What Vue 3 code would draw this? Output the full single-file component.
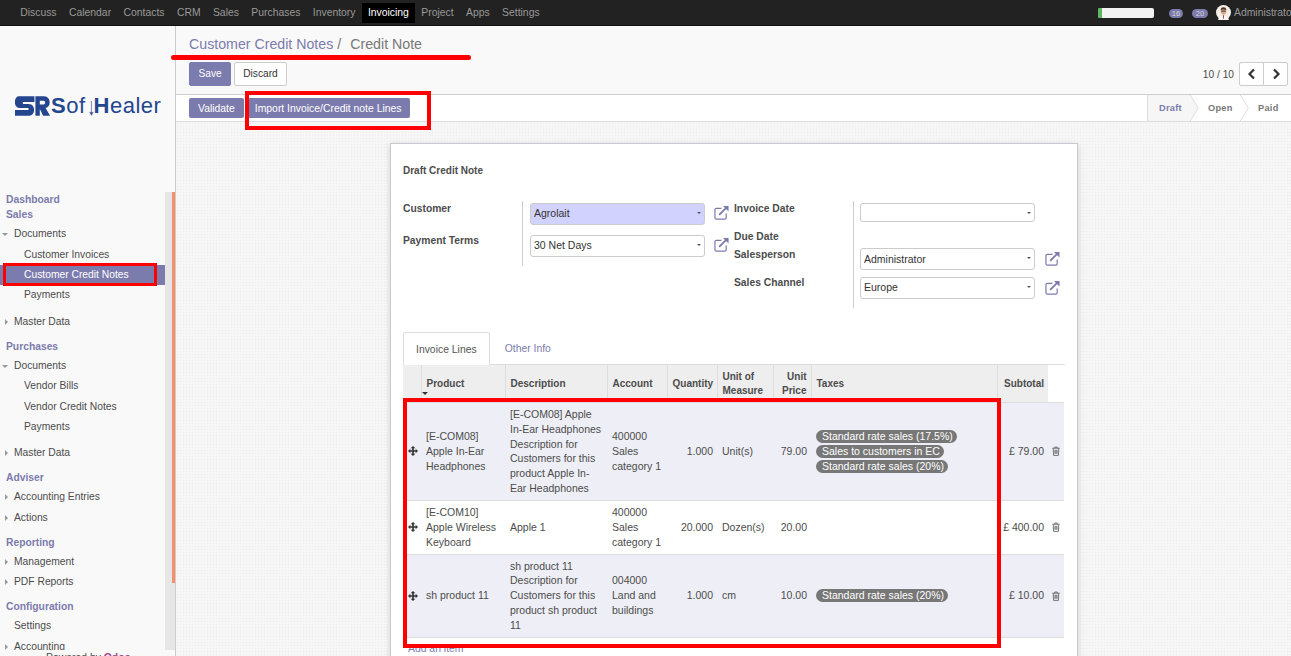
<template>
  <div class="app">
    <nav class="topbar">
      <div class="apps">
        <a v-for="app in apps" :key="app" :class="{ active: app === 'Invoicing' }">{{ app }}</a>
      </div>
      <div class="systray">
        <span class="progress"><i></i></span>
        <span class="bubble">16</span>
        <span class="bubble second">20</span>
        <svg class="avatar" viewBox="0 0 16 16">
          <circle cx="8" cy="8" r="8" fill="#f4efe9" />
          <path d="M2.5 16c.5-4 3-5 5.500-5s5 1 5.500 5z" fill="#fff" stroke="#d8d0c8" stroke-width=".5" />
          <path d="M7.400 11h1.200l-.3 4h-.6z" fill="#a33" />
          <ellipse cx="8" cy="6.500" rx="3" ry="3.800" fill="#d9a98a" />
          <path d="M5 5.500C5 3 6.500 2.300 8 2.300s3 .7 3 3.200C10 4.500 6 4.500 5 5.500z" fill="#4a342a" />
          <path d="M5.600 6h4.800v1H5.600z" fill="#333" />
        </svg>
        <span class="user">Administrator</span>
      </div>
    </nav>

    <div class="body">
      <aside class="sidebar">
        <div class="logo">
          <svg class="logo-mark" viewBox="0 0 36 20">
            <path d="M4 0H20V6H9C7.500 6 7.500 8 9 8H14C21.500 8 21.500 20 14 20H0V14H13C14.500 14 14.500 12 13 12H5C-2 12-1.500 0 4 0Z" fill="#24468e" />
            <path fill-rule="evenodd" d="M21 0H30C37 0 37.500 11 31.500 12L36 20H29L25.500 13V20H21ZM25.500 4.500V8.500H29.500C31.500 8.500 31.500 4.500 29.500 4.500Z" fill="#24468e" />
          </svg>
          <span class="logo-text"><b>S</b>of<span class="logo-t">↓</span><b>H</b>ealer</span>
        </div>

        <div class="menu">
          <template v-for="(section, i) in menu" :key="i">
            <div class="menu-head" :class="{ tight: section.tight, bare: !section.items.length }">{{ section.title }}</div>
            <template v-for="item in section.items" :key="item.label">
              <div class="menu-row" :class="{ gap: item.gap }">
                <span v-if="item.caret" class="caret" :class="item.caret"></span>
                {{ item.label }}
              </div>
              <div
                v-for="sub in item.children"
                :key="sub"
                class="menu-row sub"
                :class="{ current: sub === 'Customer Credit Notes' }"
              >{{ sub }}</div>
            </template>
          </template>
        </div>
        <div class="powered">Powered by <b>Odoo</b></div>

        <div class="scroll-track"></div>
        <div class="scroll-thumb"></div>
      </aside>

      <main class="main">
        <header class="control-panel">
          <div class="breadcrumb"><a>Customer Credit Notes</a><span class="slash">/</span><span>Credit Note</span></div>
          <div class="cp-row">
            <div class="cp-buttons">
              <button class="btn primary">Save</button>
              <button class="btn">Discard</button>
            </div>
            <div class="pager">
              <span>10 / 10</span>
              <div class="pager-btns">
                <button>
                  <svg viewBox="0 0 10 12"><path d="M7 1.500 2.500 6 7 10.500" /></svg>
                </button>
                <button>
                  <svg viewBox="0 0 10 12"><path d="M3 1.500 7.500 6 3 10.500" /></svg>
                </button>
              </div>
            </div>
          </div>
        </header>

        <div class="statusbar">
          <div class="status-actions">
            <button class="btn-sm">Validate</button>
            <button class="btn-sm">Import Invoice/Credit note Lines</button>
          </div>
          <div class="status-steps">
            <span v-for="step in steps" :key="step" class="step" :class="step.toLowerCase()">
              {{ step }}
              <svg v-if="step !== 'Paid'" class="chevron" viewBox="0 0 9 27">
                <path d="M0 0 8.500 13.500 0 27" />
              </svg>
            </span>
          </div>
        </div>

        <div class="content">
          <section class="sheet">
            <h1 class="doc-title">Draft Credit Note</h1>

            <div class="form-groups">
              <div class="group left">
                <label>Customer</label>
                <div class="field">
                  <span class="select required">Agrolait</span>
                  <svg class="ext" viewBox="0 0 16 16"><use href="#ext-link" /></svg>
                </div>
                <label>Payment Terms</label>
                <div class="field">
                  <span class="select">30 Net Days</span>
                  <svg class="ext" viewBox="0 0 16 16"><use href="#ext-link" /></svg>
                </div>
              </div>

              <div class="group right">
                <div class="r-row r1">
                  <label>Invoice Date</label>
                  <span class="select short"></span>
                </div>
                <div class="r-row r2">
                  <label>Due Date</label>
                </div>
                <div class="r-row r3">
                  <label>Salesperson</label>
                  <span class="select">Administrator</span>
                  <svg class="ext" viewBox="0 0 16 16"><use href="#ext-link" /></svg>
                </div>
                <div class="r-row r4">
                  <label>Sales Channel</label>
                  <span class="select">Europe</span>
                  <svg class="ext" viewBox="0 0 16 16"><use href="#ext-link" /></svg>
                </div>
              </div>
            </div>

            <div class="tabs">
              <a class="tab active">Invoice Lines</a>
              <a class="tab">Other Info</a>
            </div>

            <table class="lines">
              <colgroup>
                <col v-for="w in colWidths" :key="w.id" :style="{ width: w.px + 'px' }" />
              </colgroup>
              <thead>
                <tr>
                  <th></th>
                  <th class="sorted">Product</th>
                  <th>Description</th>
                  <th>Account</th>
                  <th class="num">Quantity</th>
                  <th>Unit of<br />Measure</th>
                  <th class="num">Unit<br />Price</th>
                  <th>Taxes</th>
                  <th class="num">Subtotal</th>
                  <th class="blank"></th>
                </tr>
              </thead>
              <tbody>
                <tr v-for="line in lines" :key="line.product" :class="{ odd: line.odd }">
                  <td class="handle">
                    <svg viewBox="0 0 12 12"><path d="M6 0 8.800 2.800H7V5H9.200V3.200L12 6 9.200 8.800V7H7V9.200H8.800L6 12 3.200 9.200H5V7H2.800V8.800L0 6 2.800 3.200V5H5V2.800H3.200Z" /></svg>
                  </td>
                  <td>{{ line.product }}</td>
                  <td>{{ line.description }}</td>
                  <td>{{ line.account }}</td>
                  <td class="num">{{ line.qty }}</td>
                  <td>{{ line.unit }}</td>
                  <td class="num">{{ line.price }}</td>
                  <td class="taxes">
                    <span v-for="tax in line.taxes" :key="tax" class="badge">{{ tax }}</span>
                  </td>
                  <td class="num">{{ line.subtotal }}</td>
                  <td class="trash">
                    <svg viewBox="0 0 10 12"><path d="M.5 2.500h9M3.500 2.500V1h3v1.500M1.500 2.500l.5 9h6l.5-9M3.700 4.500v5M5 4.500v5M6.300 4.500v5" /></svg>
                  </td>
                </tr>
              </tbody>
            </table>
            <a class="add-item">Add an item</a>
          </section>
        </div>
      </main>
    </div>

    <svg class="defs" width="0" height="0">
      <symbol id="ext-link" viewBox="0 0 16 16">
        <path d="M8 3.500H2.500a1.500 1.500 0 0 0-1.500 1.500v8.500a1.500 1.500 0 0 0 1.500 1.500h9a1.500 1.500 0 0 0 1.500-1.500V9" fill="none" stroke="#7c7bad" stroke-width="1.300" />
        <path d="M5.500 10.500 13 3" fill="none" stroke="#7c7bad" stroke-width="2" />
        <path d="M9.500 1H15.500V7z" fill="#7c7bad" />
      </symbol>
    </svg>

    <!-- red marks drawn over the screenshot -->
    <div class="mark underline"></div>
    <div class="mark box-import"></div>
    <div class="mark box-menu"></div>
    <div class="mark box-table"></div>
  </div>
</template>

<script setup>
const apps = ['Discuss', 'Calendar', 'Contacts', 'CRM', 'Sales', 'Purchases', 'Inventory', 'Invoicing', 'Project', 'Apps', 'Settings']

const steps = ['Draft', 'Open', 'Paid']

const menu = [
  { title: 'Dashboard', tight: true, items: [] },
  {
    title: 'Sales',
    tight: true,
    items: [
      { label: 'Documents', caret: 'down', children: ['Customer Invoices', 'Customer Credit Notes', 'Payments'] },
      { label: 'Master Data', caret: 'side', gap: true },
    ],
  },
  {
    title: 'Purchases',
    items: [
      { label: 'Documents', caret: 'down', children: ['Vendor Bills', 'Vendor Credit Notes', 'Payments '] },
      { label: 'Master Data ', caret: 'side', gap: true },
    ],
  },
  {
    title: 'Adviser',
    items: [
      { label: 'Accounting Entries', caret: 'side' },
      { label: 'Actions', caret: 'side' },
    ],
  },
  {
    title: 'Reporting',
    items: [
      { label: 'Management', caret: 'side' },
      { label: 'PDF Reports', caret: 'side' },
    ],
  },
  {
    title: 'Configuration',
    items: [{ label: 'Settings' }, { label: 'Accounting', caret: 'side' }],
  },
]

const colWidths = [
  { id: 'handle', px: 18 },
  { id: 'product', px: 84 },
  { id: 'desc', px: 102 },
  { id: 'account', px: 60 },
  { id: 'qty', px: 50 },
  { id: 'unit', px: 56 },
  { id: 'price', px: 38 },
  { id: 'taxes', px: 186 },
  { id: 'subtotal', px: 51 },
  { id: 'trash', px: 16 },
]

const lines = [
  {
    odd: true,
    product: '[E-COM08] Apple In-Ear Headphones',
    description: '[E-COM08] Apple In-Ear Headphones Description for Customers for this product Apple In-Ear Headphones',
    account: '400000 Sales category 1',
    qty: '1.000',
    unit: 'Unit(s)',
    price: '79.00',
    taxes: ['Standard rate sales (17.5%)', 'Sales to customers in EC', 'Standard rate sales (20%)'],
    subtotal: '£ 79.00',
  },
  {
    product: '[E-COM10] Apple Wireless Keyboard',
    description: 'Apple 1',
    account: '400000 Sales category 1',
    qty: '20.000',
    unit: 'Dozen(s)',
    price: '20.00',
    taxes: [],
    subtotal: '£ 400.00',
  },
  {
    odd: true,
    product: 'sh product 11',
    description: 'sh product 11 Description for Customers for this product sh product 11',
    account: '004000 Land and buildings',
    qty: '1.000',
    unit: 'cm',
    price: '10.00',
    taxes: ['Standard rate sales (20%)'],
    subtotal: '£ 10.00',
  },
]
</script>

<style>
html,
body {
  margin: 0;
  overflow: hidden;
}
</style>

<style scoped>
.app {
  position: relative;
  display: flex;
  flex-direction: column;
  height: 656px;
  overflow: hidden;
  font-family: "Liberation Sans", Arial, sans-serif;
  font-size: 10.400px;
  color: #4c4c4c;
}

.topbar {
  display: flex;
  justify-content: space-between;
  flex: none;
  height: 25px;
  padding-left: 14px;
  background: #222;
  border-bottom: 1px solid #111;
  overflow: hidden;
  font-size: 10.400px;
}
.apps {
  display: flex;
}
.apps a {
  padding: 0 6.200px;
  line-height: 25px;
  color: #999;
}
.apps a.active {
  height: 20px;
  margin-top: 3px;
  line-height: 19px;
  background: #000;
  color: #fff;
}
.systray {
  display: flex;
  align-items: center;
  flex: none;
  width: 193px;
}
.progress {
  flex: none;
  width: 56px;
  height: 10px;
  margin-right: 15px;
  background: #f3f3f3;
  border-radius: 2px;
  overflow: hidden;
}
.progress i {
  display: block;
  width: 4px;
  height: 100%;
  background: #5cb85c;
}
.bubble {
  position: relative;
  flex: none;
  width: 14px;
  height: 9px;
  margin: 1px 9px 0 0;
  border-radius: 5px;
  background: #7c7bad;
  color: #d8d8d8;
  font-size: 7.500px;
  line-height: 9px;
  text-align: center;
}
.bubble::before {
  content: "";
  position: absolute;
  z-index: -1;
  left: 1px;
  top: -2px;
  width: 6px;
  height: 5px;
  border-radius: 50%;
  background: #6f7a92;
}
.bubble.second {
  width: 16px;
  margin-right: 8px;
}
.avatar {
  flex: none;
  width: 15px;
  height: 15px;
  margin-right: 3px;
}
.user {
  color: #999;
  white-space: nowrap;
}

.body {
  display: flex;
  flex: 1;
  min-height: 0;
}

.sidebar {
  position: relative;
  flex: none;
  width: 175px;
  background: #f9f9f9;
  border-right: 1px solid #ccc;
  overflow: hidden;
}
.logo {
  display: flex;
  align-items: center;
  height: 165px;
  padding: 0 0 6px 15px;
  box-sizing: border-box;
}
.logo-mark {
  flex: none;
  width: 35px;
  height: 20px;
  margin-right: 1px;
}
.logo-text {
  display: flex;
  align-items: center;
  font-size: 22px;
  letter-spacing: .5px;
  color: #24468e;
}
.logo-t {
  display: inline-block;
  width: 8px;
  font-size: 25px;
  font-weight: 700;
  line-height: 22px;
  letter-spacing: 0;
  text-align: center;
  transform: scaleX(.6);
}
.menu {
  width: 165px;
  height: 459px;
  padding-top: 1px;
  box-sizing: border-box;
  overflow: hidden;
  font-size: 10.300px;
}
.menu-head {
  height: 15px;
  margin: 6.500px 0 2.200px;
  padding-left: 6px;
  line-height: 15px;
  font-weight: 700;
  color: #7c7bad;
}
.menu-head.tight {
  margin-top: 0;
}
.menu-head.bare {
  margin-bottom: 0;
}
.menu-row {
  position: relative;
  height: 20.400px;
  padding-left: 14px;
  line-height: 20.400px;
  white-space: nowrap;
  color: #4c4c4c;
}
.menu-row.gap {
  margin-top: 6px;
}
.menu-row.sub {
  padding-left: 24px;
}
.menu-row.current {
  background: #7c7bad;
  color: #fff;
}
.caret {
  position: absolute;
  left: 5px;
  top: 7px;
  width: 0;
  height: 0;
  border-style: solid;
}
.caret.down {
  left: 2px;
  top: 9px;
  border-width: 3px 3px 0;
  border-color: #999 transparent transparent;
}
.caret.side {
  border-width: 3px 0 3px 3px;
  border-color: transparent transparent transparent #999;
}
.powered {
  position: absolute;
  left: 46px;
  top: 626px;
  white-space: nowrap;
}
.powered b {
  color: #a24689;
}
.scroll-track {
  position: absolute;
  left: 165px;
  top: 166px;
  width: 10px;
  height: 458px;
  background: #e6e6e6;
}
.scroll-thumb {
  position: absolute;
  left: 172px;
  top: 166px;
  width: 3px;
  height: 391px;
  background: #f4906c;
}

.main {
  display: flex;
  flex-direction: column;
  flex: 1;
  min-width: 0;
}
.control-panel {
  flex: none;
  height: 68px;
  padding: 0 3px 0 13px;
  background: #f9f9f9;
  box-sizing: border-box;
}
.breadcrumb {
  height: 36px;
  font-size: 14.200px;
  line-height: 36px;
  color: #777;
}
.breadcrumb a {
  color: #7c7bad;
}
.breadcrumb .slash {
  margin: 0 9px 0 4px;
}
.cp-row {
  display: flex;
  justify-content: space-between;
}
.cp-buttons {
  display: flex;
  gap: 3px;
}
.btn {
  height: 24px;
  padding: 0 8px 2px;
  background: #fff;
  border: 1px solid #ccc;
  border-radius: 2px;
  font: inherit;
  font-size: 10.200px;
  color: #333;
}
.btn.primary {
  padding: 0 8.500px 2px;
  background: #7c7bad;
  border-color: #7c7bad;
  color: #fff;
}
.pager {
  display: flex;
  align-items: center;
  gap: 5px;
  font-size: 10.200px;
}
.pager-btns {
  display: flex;
}
.pager-btns button {
  display: flex;
  align-items: center;
  justify-content: center;
  width: 25px;
  height: 24px;
  padding: 0;
  background: #fff;
  border: 1px solid #ccc;
}
.pager-btns button + button {
  margin-left: -1px;
}
.pager-btns button:first-child {
  border-radius: 2px 0 0 2px;
}
.pager-btns button:last-child {
  border-radius: 0 2px 2px 0;
}
.pager-btns svg {
  width: 10px;
  height: 12px;
  fill: none;
  stroke: #333;
  stroke-width: 2.200;
}

.statusbar {
  display: flex;
  justify-content: space-between;
  align-items: center;
  flex: none;
  height: 28px;
  padding-left: 13px;
  background: #fff;
  border-top: 1px solid #ccc;
  border-bottom: 1px solid #ddd;
  box-sizing: border-box;
}
.status-actions {
  display: flex;
  gap: 2px;
}
.btn-sm {
  height: 20px;
  padding: 0 9px;
  background: #7c7bad;
  border: 0;
  border-radius: 2px;
  font: inherit;
  color: #fff;
}
.status-steps {
  display: flex;
  align-self: stretch;
}
.step {
  position: relative;
  width: 50px;
  box-sizing: border-box;
  padding-left: 18px;
  font-size: 9.200px;
  font-weight: 700;
  letter-spacing: .3px;
  line-height: 26px;
  color: #777;
  white-space: nowrap;
}
.step.draft {
  width: 43px;
  padding-left: 11px;
  background: #f6f6f6;
  border-left: 1px solid #ddd;
  color: #7c7bad;
}
.step.paid {
  width: 51px;
}
.chevron {
  position: absolute;
  z-index: 1;
  left: 100%;
  top: 0;
  width: 9px;
  height: 26px;
  fill: #fff;
  stroke: #ddd;
}
.step.draft .chevron {
  fill: #f6f6f6;
}

.content {
  flex: 1;
  min-height: 0;
  padding: 21px 0 0 214px;
  overflow: hidden;
  background-color: #f6f6f6;
  background-image: radial-gradient(#ececec 0.6px, transparent 0.7px);
  background-size: 3px 3px;
}
.sheet {
  width: 688px;
  height: 520px;
  padding: 0 12px;
  background: #fff;
  border: 1px solid #c8c8d0;
  border-bottom: 0;
  box-shadow: 0 2px 6px rgba(0, 0, 0, .15);
  box-sizing: border-box;
}
.doc-title {
  margin: 0;
  padding-top: 20px;
  font-size: 10px;
  line-height: 14px;
  font-weight: 700;
}
.form-groups {
  display: flex;
  height: 107px;
  margin-top: 23px;
}
label {
  padding-top: 1px;
  font-size: 10.300px;
  font-weight: 700;
  line-height: 14px;
}
.group.left {
  display: grid;
  grid-template-columns: 120px 211px;
  grid-template-rows: 32px 33px;
  width: 331px;
  height: 65px;
}
.group.left label {
  border-right: 1px solid #ccc;
}
.field {
  display: flex;
  align-items: flex-start;
  padding: 2px 0 0 7px;
}
.select {
  position: relative;
  flex: none;
  width: 175px;
  height: 22px;
  padding-left: 3px;
  box-sizing: border-box;
  background: #fff;
  border: 1px solid #ccc;
  border-radius: 3px;
  font-size: 10.500px;
  line-height: 19px;
  color: #333;
}
.select::after {
  content: "";
  position: absolute;
  right: 3.500px;
  top: 8px;
  border-style: solid;
  border-width: 2.500px 2.500px 0;
  border-color: #555 transparent transparent;
}
.select.required {
  background: #d2d2ff;
}
.select.short {
  height: 19px;
}
.ext {
  flex: none;
  width: 15px;
  height: 15px;
  margin: 2px 0 0 9px;
}
.group.right {
  position: relative;
  width: 330px;
  height: 107px;
}
.r-row {
  display: flex;
  align-items: flex-start;
}
.r-row label {
  flex: none;
  width: 119px;
  padding-right: 7px;
}
.r1 {
  height: 28px;
}
.r1 .select {
  margin-top: 2px;
}
.r2 {
  height: 18px;
}
.r3 {
  height: 28px;
}
.r3 .select {
  margin-top: 1px;
  line-height: 20px;
}
.r3 .ext {
  margin: 4px 0 0 10px;
}
.r4 .select {
  margin-top: 2px;
}
.r4 .ext {
  margin: 5px 0 0 10px;
}
.group.right::before {
  content: "";
  position: absolute;
  left: 119px;
  top: 0;
  bottom: 0;
  width: 1px;
  background: #ccc;
}

.tabs {
  display: flex;
  height: 33px;
  margin-top: 24px;
  border-bottom: 1px solid #ddd;
  box-sizing: border-box;
}
.tab {
  height: 33px;
  padding: 0 13px;
  margin-right: 2px;
  box-sizing: border-box;
  line-height: 33px;
  color: #7c7bad;
}
.tab.active {
  padding: 0 12px;
  background: #fff;
  border: 1px solid #ddd;
  border-bottom: 0;
  border-radius: 3px 3px 0 0;
  color: #555;
}

.lines {
  width: 661px;
  border-collapse: collapse;
  table-layout: fixed;
  font-size: 10.500px;
  line-height: 14.800px;
}
.lines th {
  height: 37px;
  padding: 0 4px 0 5px;
  background: #eee;
  border-left: 1px solid #ddd;
  text-align: left;
  font-size: 10px;
  font-weight: 700;
  line-height: 14px;
  color: #4c4c4c;
}
.lines th:first-child {
  border-left: 0;
}
.lines th.blank {
  background: #fff;
  border-left: 0;
}
.lines th.sorted {
  position: relative;
}
.lines th.sorted::after {
  content: "";
  position: absolute;
  left: 0;
  bottom: 7px;
  border-style: solid;
  border-width: 3px 3px 0;
  border-color: #333 transparent transparent;
}
.lines .num {
  text-align: right;
  white-space: nowrap;
}
.lines td {
  padding: 4.100px 4px 4.100px 5px;
  border-top: 1px solid #ddd;
  border-bottom: 1px solid #ddd;
  vertical-align: middle;
  color: #4c4c4c;
}
.lines tr.odd td {
  background: #eeeff6;
}
.lines td.handle {
  padding: 0 0 0 5px;
}
.handle svg {
  display: block;
  width: 10px;
  height: 10px;
  fill: #333;
}
.lines td.trash {
  padding: 0 0 0 4px;
}
.trash svg {
  display: block;
  width: 8px;
  height: 10px;
  fill: none;
  stroke: #555;
  stroke-width: 1;
}
.taxes .badge {
  display: block;
  width: fit-content;
  height: 13px;
  margin-bottom: 2px;
  padding: 0 4px 0 6px;
  background: #777;
  border-radius: 7px;
  line-height: 13px;
  color: #fff;
  white-space: nowrap;
}
.taxes .badge:last-child {
  margin-bottom: 0;
}
.add-item {
  display: block;
  margin: 5px 0 0 5px;
  color: #7c7bad;
}

.defs {
  position: absolute;
}
.mark {
  position: absolute;
  box-sizing: border-box;
  pointer-events: none;
}
.underline {
  left: 171px;
  top: 55px;
  width: 300px;
  height: 5px;
  background: #f00;
  border-radius: 2.500px;
}
.box-import {
  left: 245px;
  top: 91px;
  width: 186px;
  height: 39px;
  border: 4px solid #f00;
}
.box-menu {
  left: 3px;
  top: 263px;
  width: 154px;
  height: 23px;
  border: 3px solid #f00;
}
.box-table {
  left: 403px;
  top: 398px;
  width: 598px;
  height: 250px;
  border: 4px solid #f00;
}
</style>
